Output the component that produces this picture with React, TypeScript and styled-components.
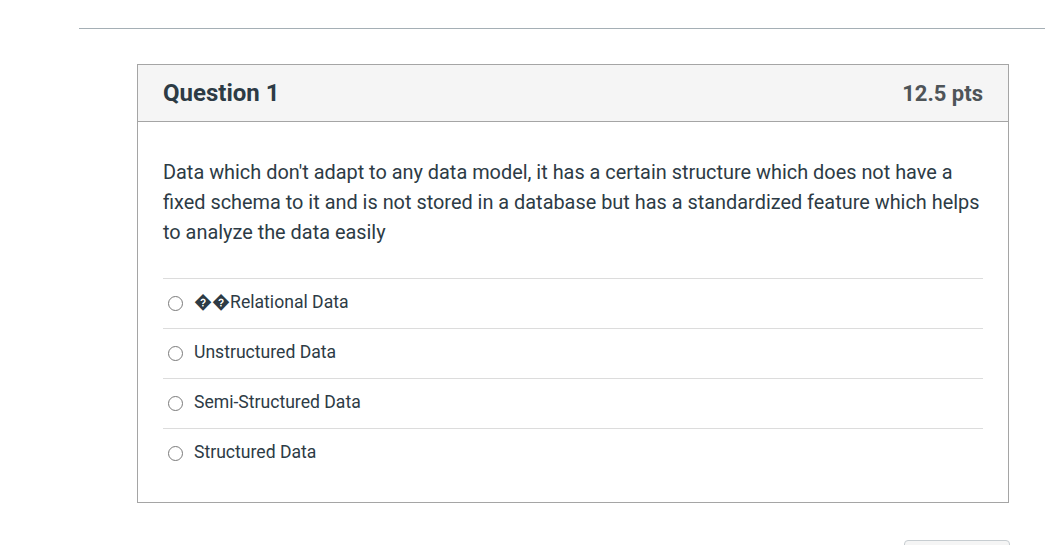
import React from 'react'
import styled, { createGlobalStyle } from 'styled-components'

const GlobalStyle = createGlobalStyle`
  body {
    margin: 0;
    background: #fff;
    font-family: Roboto, "Liberation Sans", sans-serif;
    color: #2d3b45;
  }
`

const answers = ['\uFFFD\uFFFDRelational Data', 'Unstructured Data', 'Semi-Structured Data', 'Structured Data']

const Page = styled.div`
  width: 1045px;
  height: 545px;
  overflow: hidden;
  padding-top: 28px;
  box-sizing: border-box;
`

const Rule = styled.hr`
  margin: 0 0 0 79px;
  border: 0;
  border-top: 1px solid #a5afb5;
  height: 0;
`

const Content = styled.div`
  padding: 35px 0 0 137px;
  width: 872px;
`

const Card = styled.div`
  border: 1px solid #a5a5a5;
  background: #fff;
`

const Header = styled.div`
  display: flex;
  justify-content: space-between;
  align-items: center;
  height: 56px;
  padding: 0 25px;
  background: #f5f5f5;
  border-bottom: 1px solid #a5a5a5;
`

const Title = styled.h2`
  margin: 0;
  font-size: 24px;
  font-weight: 700;
  color: #2d3b45;
`

const Points = styled.div`
  font-size: 22px;
  font-weight: 700;
  color: #4e5458;
`

const Body = styled.div`
  padding: 36px 22px 24px 25px;
`

const Prompt = styled.p`
  margin: 0 3px 30px 0;
  font-size: 19.9px;
  line-height: 30px;
  color: #2d3b45;
`

const AnswerList = styled.div`
  border-top: 1px solid #dcdcdc;
  margin-right: 3px;
`

const Answer = styled.label<{ $last?: boolean }>`
  display: flex;
  align-items: center;
  height: 46px;
  padding: 0 0 3px 5px;
  border-bottom: ${({ $last }) => ($last ? 'none' : '1px solid #dcdcdc')};
  font-size: 17.6px;
  color: #2d3b45;
`

const Radio = styled.span`
  width: 15px;
  height: 15px;
  border: 1px solid #7a7a7a;
  border-radius: 50%;
  margin: 2px 11px 0 0;
  flex-shrink: 0;
  box-sizing: border-box;
  background: #fff;
`

const NextButton = styled.div`
  margin: 37px 0 0 767px;
  width: 104px;
  height: 30px;
  border: 1px solid #c7cdd1;
  border-radius: 4px;
  background: #f5f5f5;
`

export default function App() {
  return (
    <Page>
      <GlobalStyle />
      <Rule />
      <Content>
        <Card>
          <Header>
            <Title>Question 1</Title>
            <Points>12.5 pts</Points>
          </Header>
          <Body>
            <Prompt>
              Data which don't adapt to any data model, it has a certain structure which does not have a fixed
              schema to it and is not stored in a database but has a standardized feature which helps to analyze
              the data easily
            </Prompt>
            <AnswerList>
              {answers.map((a, i) => (
                <Answer key={a} $last={i === answers.length - 1}>
                  <Radio />
                  {a}
                </Answer>
              ))}
            </AnswerList>
          </Body>
        </Card>
        <NextButton />
      </Content>
    </Page>
  )
}
